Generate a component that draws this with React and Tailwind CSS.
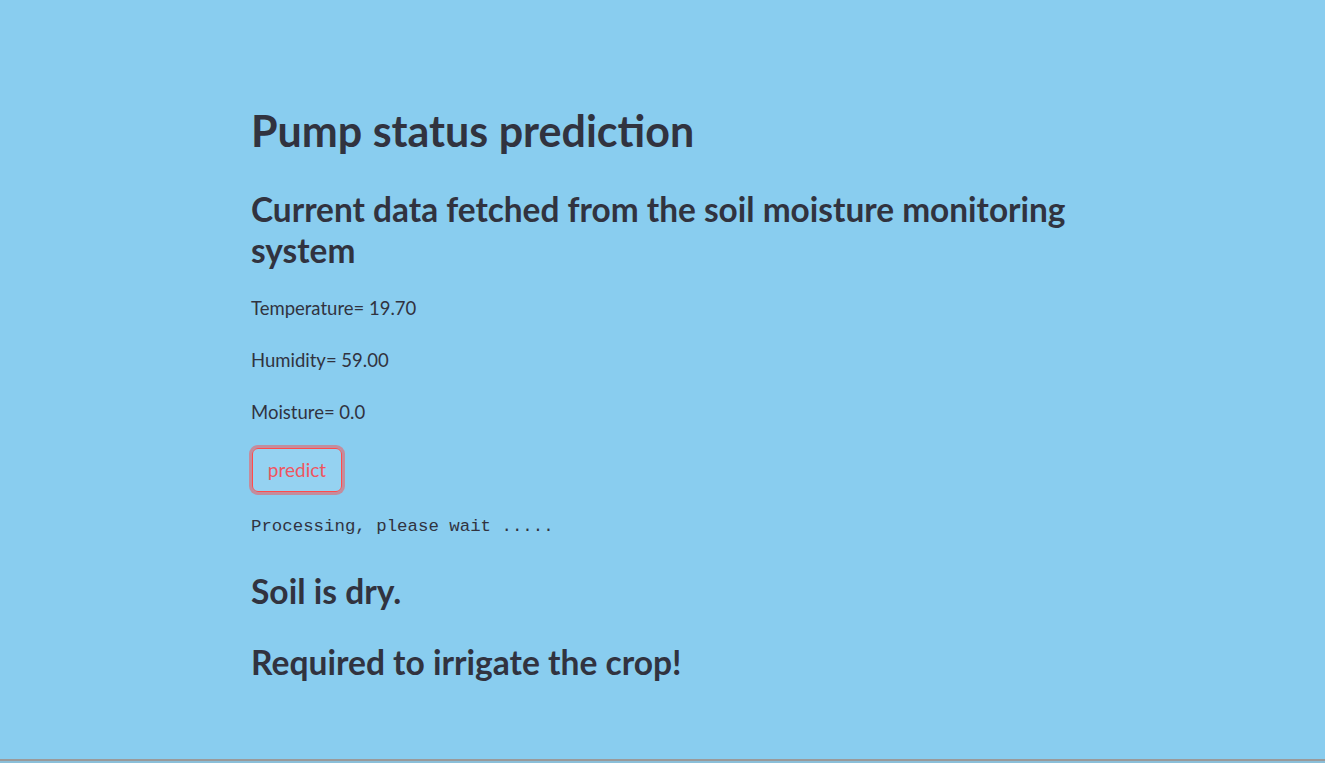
import React from 'react';

function App() {
  return (
    <div className="h-[763px] flex flex-col bg-[#89cdef] text-[#31333f] overflow-hidden" style={{ fontFamily: 'Lato, "Noto Sans", sans-serif' }}>
      <div className="flex-1">
        <div className="ml-[251px] w-[822px] pt-[104px]">
          {/* Title */}
          <h1 className="text-[43px] font-bold leading-[54px]">Pump status prediction</h1>

          {/* Current data */}
          <h2 className="mt-[31px] text-[33.4px] font-bold leading-[41px]">
            Current data fetched from the soil moisture monitoring system
          </h2>

          <p className="mt-[25px] text-[18.5px] leading-[24px]">Temperature= 19.70</p>
          <p className="mt-[28px] text-[18.5px] leading-[24px]">Humidity= 59.00</p>
          <p className="mt-[28px] text-[18.5px] leading-[24px]">Moisture= 0.0</p>

          <button className="mt-[24px] ml-px w-[90px] h-[44px] rounded-[6px] border border-[#ff4b4b] bg-white/10 text-[#f0555f] text-[19px] ring-[3px] ring-[#ff4b4b]/50">
            predict
          </button>

          <pre className="mt-[23px] text-[17.4px] leading-[24px]" style={{ fontFamily: '"Liberation Mono", "DejaVu Sans Mono", monospace' }}>
            Processing, please wait .....
          </pre>

          <h3 className="mt-[32px] text-[33.6px] font-bold leading-[41px]">Soil is dry.</h3>
          <h3 className="mt-[30px] text-[33.6px] font-bold leading-[41px]">Required to irrigate the crop!</h3>
        </div>
      </div>
      <div className="h-[2px] bg-[#9a9a9a]" />
      <div className="h-[2px] bg-[#8bbfd9]" />
    </div>
  );
}

export default App;
